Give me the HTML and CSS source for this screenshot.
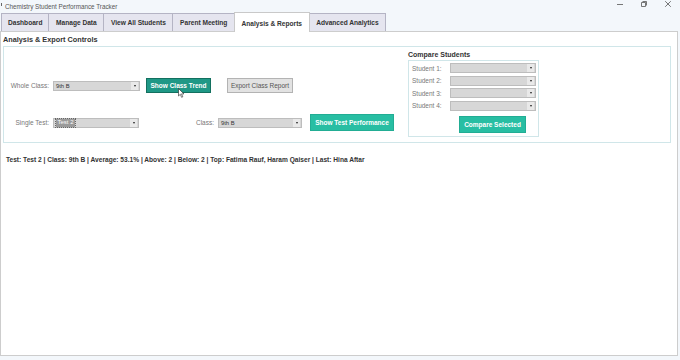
FILE: index.html
```html
<!DOCTYPE html>
<html>
<head>
<meta charset="utf-8">
<title>Chemistry Student Performance Tracker</title>
<link rel="stylesheet" href="styles.css">
</head>
<body>
<div class="window">
  <div class="titlebar">
    <span class="app-icon"></span>
    <span class="title">Chemistry Student Performance Tracker</span>
    <div class="win-ctrls">
      <span class="ctrl"><svg width="8" height="8" viewBox="0 0 8 8"><path d="M1 4.5H7" stroke="#555" stroke-width="0.8"/></svg></span>
      <span class="ctrl"><svg width="8" height="8" viewBox="0 0 8 8"><path d="M2.5 1.5H6.5V5.5M1.5 2.5H5.5V6.5H1.5Z" fill="none" stroke="#555" stroke-width="0.8"/></svg></span>
      <span class="ctrl"><svg width="8" height="8" viewBox="0 0 8 8"><path d="M1.2 1.2L6.8 6.8M6.8 1.2L1.2 6.8" stroke="#555" stroke-width="0.8"/></svg></span>
    </div>
  </div>
  <div class="tabs">
    <div class="tab">Dashboard</div>
    <div class="tab">Manage Data</div>
    <div class="tab">View All Students</div>
    <div class="tab">Parent Meeting</div>
    <div class="tab active">Analysis &amp; Reports</div>
    <div class="tab">Advanced Analytics</div>
  </div>
  <div class="panel">
    <div class="heading">Analysis &amp; Export Controls</div>
    <div class="group">
      <div class="left">
        <div class="row row-first">
          <span class="lbl">Whole Class:</span>
          <div class="combo combo-a"><span class="val">9th B</span><span class="arrow"></span></div>
          <button class="btn btn-dark btn-trend">Show Class Trend
            <svg class="cursor" width="7" height="10" viewBox="0 0 7 10"><path d="M0.5 0.5V8L2.3 6.3L3.6 9.3L4.8 8.8L3.5 5.9H6Z" fill="#fff" stroke="#222" stroke-width="0.6" stroke-linejoin="round"/></svg>
          </button>
          <button class="btn btn-gray btn-export">Export Class Report</button>
        </div>
        <div class="row row-second">
          <span class="lbl">Single Test:</span>
          <div class="combo combo-b"><span class="val"><span class="sel">Test 2</span></span><span class="arrow"></span></div>
          <span class="lbl lbl-class">Class:</span>
          <div class="combo combo-c"><span class="val">9th B</span><span class="arrow"></span></div>
          <button class="btn btn-teal btn-perf">Show Test Performance</button>
        </div>
      </div>
      <div class="compare">
        <div class="compare-title">Compare Students</div>
        <div class="compare-box">
          <div class="srow"><span class="slbl">Student 1:</span><div class="combo combo-s"><span class="val"></span><span class="arrow"></span></div></div>
          <div class="srow"><span class="slbl">Student 2:</span><div class="combo combo-s"><span class="val"></span><span class="arrow"></span></div></div>
          <div class="srow"><span class="slbl">Student 3:</span><div class="combo combo-s"><span class="val"></span><span class="arrow"></span></div></div>
          <div class="srow"><span class="slbl">Student 4:</span><div class="combo combo-s"><span class="val"></span><span class="arrow"></span></div></div>
          <button class="btn btn-teal btn-compare">Compare Selected</button>
        </div>
      </div>
    </div>
    <div class="status">Test: Test 2 | Class: 9th B | Average: 53.1% | Above: 2 | Below: 2 | Top: Fatima Rauf, Haram Qaiser | Last: Hina Aftar</div>
  </div>
</div>
</body>
</html>
```

FILE: styles.css
```css
* { box-sizing: border-box; }

body {
  margin: 0;
  background: #f3f7fb;
  font-family: "Liberation Sans", Arial, sans-serif;
  color: #333;
}

.window {
  width: 680px;
  height: 360px;
  display: flex;
  flex-direction: column;
}

.titlebar {
  height: 12px;
  display: flex;
  align-items: center;
  padding-left: 1px;
  font-size: 6.3px;
  color: #555;
}

.app-icon {
  width: 1px;
  height: 3px;
  background: #666;
  margin-right: 3px;
  margin-top: -4px;
}

.win-ctrls {
  margin-left: auto;
  display: flex;
}

.ctrl {
  width: 24px;
  height: 12px;
  display: flex;
  align-items: center;
  justify-content: center;
  padding-bottom: 4px;
}

.tabs {
  height: 19px;
  display: flex;
  align-items: flex-end;
  padding-left: 1px;
}

.tab {
  height: 18px;
  padding: 0 6.6px;
  display: flex;
  align-items: center;
  background: #e5e5ef;
  border: 1px solid #b4b4c4;
  border-bottom: none;
  margin-right: -1px;
  font-size: 6.6px;
  font-weight: bold;
  color: #333;
}

.tab:first-child {
  padding: 0 6px;
}

.tab.active {
  height: 20px;
  margin-bottom: -1px;
  background: #fff;
  border-color: #c9c9c9;
  position: relative;
  z-index: 1;
  padding-top: 2px;
}

.panel {
  flex: 1;
  background: #fff;
  border: 1px solid #cdcdcd;
  margin-right: 2px;
  margin-bottom: 4px;
}

.heading {
  padding: 3px 0 0 2px;
  height: 14px;
  font-size: 7.3px;
  font-weight: bold;
  color: #333;
}

.group {
  margin: 0 6px 0 2px;
  height: 97px;
  border: 1px solid #d0e6e9;
  display: flex;
}

.left {
  width: 404px;
}

.row {
  height: 17px;
  display: flex;
  align-items: center;
}

.row-first { margin-top: 30px; }
.row-second { margin-top: 20px; }

.lbl {
  width: 45px;
  margin-right: 4px;
  text-align: right;
  font-size: 6.5px;
  color: #777;
}

.lbl-class {
  width: 75px;
}

.combo {
  height: 10px;
  background: #d7d7d7;
  border: 1px solid #bdbdbd;
  display: flex;
  align-items: center;
  font-size: 5.8px;
  color: #333;
}

.combo .val {
  flex: 1;
  padding-left: 2px;
  display: flex;
  align-items: center;
}

.combo .sel {
  padding: 0.5px 1.5px;
  background: #9a9a9a;
  color: #fafafa;
  font-size: 6px;
  line-height: 7px;
  outline: 0.5px dotted #666;
}

.combo .arrow {
  width: 7px;
  height: 8px;
  margin-left: auto;
  margin-right: 1px;
  background: #e9e9e9;
  display: flex;
  align-items: center;
  justify-content: center;
}

.combo .arrow::after {
  content: "";
  border-left: 1.5px solid transparent;
  border-right: 1.5px solid transparent;
  border-top: 2px solid #222;
}

.combo-a { width: 87px; }
.combo-b { width: 86px; }
.combo-c { width: 84px; }
.combo-s { width: 86px; }

.btn {
  font-family: "Liberation Sans", Arial, sans-serif;
  font-size: 6.5px;
  font-weight: bold;
  padding: 0;
  margin: 0;
  display: flex;
  align-items: center;
  justify-content: center;
  cursor: default;
}

.btn-dark {
  background: #1f9886;
  border: 1px solid #13705f;
  color: #fff;
}

.btn-teal {
  background: #28bea3;
  border: 1px solid #22ad94;
  color: #fff;
}

.btn-gray {
  background: #e2e2e2;
  border: 1px solid #b3b3b3;
  color: #555;
  font-weight: normal;
}

.btn-trend {
  width: 65px;
  height: 15px;
  margin-left: 6px;
  position: relative;
}

.cursor {
  position: absolute;
  left: 31px;
  top: 9px;
}

.btn-export {
  width: 66px;
  height: 15px;
  margin-left: 16px;
}

.btn-perf {
  width: 84px;
  height: 17px;
  margin-left: 8px;
}

.compare {
  width: 131px;
  padding-top: 2px;
}

.compare-title {
  height: 11px;
  font-size: 7px;
  font-weight: bold;
  color: #333;
  display: flex;
  align-items: center;
}

.compare-box {
  height: 77px;
  border: 1px solid #d0e6e9;
  padding: 1px 0 0 3px;
}

.srow {
  height: 12.5px;
  display: flex;
  align-items: center;
}

.slbl {
  width: 38px;
  font-size: 6.5px;
  color: #777;
}

.btn-compare {
  width: 67px;
  height: 17px;
  margin: 4px 0 0 47px;
}

.status {
  margin-top: 11px;
  padding-left: 5px;
  height: 10px;
  display: flex;
  align-items: center;
  font-size: 6.6px;
  font-weight: bold;
  color: #333;
}
```
